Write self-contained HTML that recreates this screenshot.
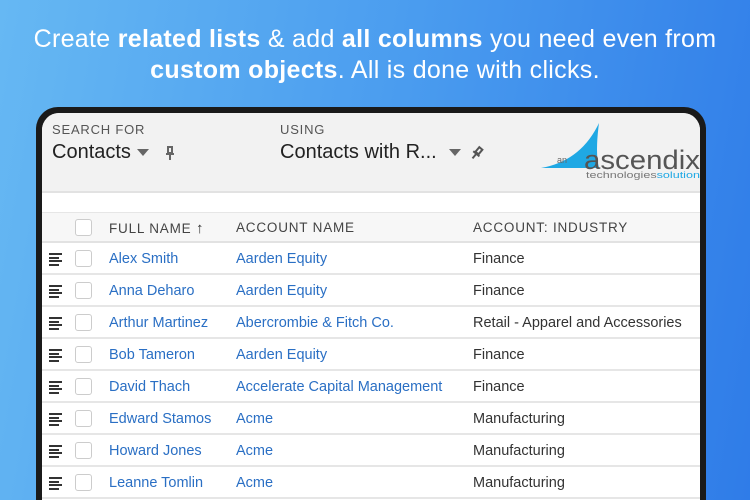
<!DOCTYPE html>
<html><head><meta charset="utf-8"><style>
*{margin:0;padding:0;box-sizing:border-box}
html,body{width:750px;height:500px;overflow:hidden}
body{background:linear-gradient(100deg,#66b8f3 0%,#4a9cef 50%,#2f7ce8 100%);font-family:"Liberation Sans",sans-serif;position:relative}
.title{position:absolute;top:24px;left:0;width:750px;text-align:center;color:#fff;font-size:25px;line-height:31px;letter-spacing:0.3px}
.frame{position:absolute;left:36px;top:107px;width:670px;height:400px;background:#1a1a1a;border-radius:22px 22px 0 0}
.inner{position:absolute;left:42px;top:113px;width:658px;height:390px;background:#fff;border-radius:17px 17px 0 0;overflow:hidden}
.hdr{position:absolute;left:0;top:0;width:100%;height:80px;background:#f2f2f2;border-bottom:2px solid #e2e2e2}
.lbl{position:absolute;font-size:13px;color:#555;letter-spacing:.8px}
.big{position:absolute;font-size:20px;color:#222}
.tri{display:inline-block;width:0;height:0;border-left:6px solid transparent;border-right:6px solid transparent;border-top:7px solid #666;vertical-align:middle;margin-left:6px}
.th{position:absolute;left:0;top:99px;width:100%;height:31px;background:#f7f7f7;border-top:1px solid #e6e6e6;border-bottom:2px solid #e2e2e2}
.th span{position:absolute;top:7px;font-size:13.5px;color:#444;letter-spacing:.8px}
.row{position:absolute;left:0;width:100%;height:32px;border-bottom:2px solid #e6e6e6;font-size:14.5px}
.row span{position:absolute;top:8px}
.a{color:#2a6fc4}.t{color:#333}
.cb{position:absolute;left:33px;top:7px;width:17px;height:17px;border:1px solid #ccc;border-radius:3px;background:#fff}
.ham{position:absolute;left:7px;top:10px;width:13px}
.ham i{display:block;height:2px;background:#333;margin-bottom:1.5px}
</style></head><body>
<div class="title">Create <b>related lists</b> &amp; add <b>all columns</b> you need even from<br><b>custom objects</b>. All is done with clicks.</div>
<div class="frame"></div>
<div class="inner">
 <div class="hdr">
  <div class="lbl" style="left:10px;top:9px">SEARCH FOR</div>
  <div class="big" style="left:10px;top:28px">Contacts<span class="tri"></span><svg width="14" height="16" viewBox="0 0 14 16" style="margin-left:14px;vertical-align:middle"><path d="M4 2h6M5 2v6h4V2M3 9h8M7 9v6" stroke="#666" stroke-width="2" fill="none"/></svg></div>
  <div class="lbl" style="left:238px;top:9px">USING</div>
  <div class="big" style="left:238px;top:28px">Contacts with R...<span class="tri" style="margin-left:12px"></span><svg width="16" height="16" viewBox="0 0 16 16" style="margin-left:8px;vertical-align:middle"><g transform="rotate(40 8 8)"><path d="M5 2h6M6 2v6h4V2M4 9h8M8 9v6" stroke="#555" stroke-width="2" fill="none"/></g></svg></div>
  <svg style="position:absolute;left:497px;top:8px" width="163" height="60" viewBox="0 0 163 60">
   <path d="M2 47 Q42 40 60 2 Q56 32 60 47 Z" fill="#1fa8e4"/>
   <text x="18" y="42" font-size="9" fill="#666" font-family="Liberation Sans">an</text>
   <text x="45" y="48" font-size="27" fill="#555" font-family="Liberation Sans" textLength="116" lengthAdjust="spacingAndGlyphs">ascendix</text>
   <text x="47" y="57" font-size="9" fill="#777" font-family="Liberation Sans" textLength="114" lengthAdjust="spacingAndGlyphs">technologies<tspan fill="#1fa8e4">solution</tspan></text>
  </svg>
 </div>
 <div class="th">
  <div class="cb" style="top:6px"></div>
  <span style="left:67px">FULL NAME <b style="font-size:15px;color:#333">↑</b></span>
  <span style="left:194px">ACCOUNT NAME</span>
  <span style="left:431px">ACCOUNT: INDUSTRY</span>
 </div>
 <div class="row" style="top:130px"><div class="ham"><i></i><i style="width:10px"></i><i></i><i style="width:10px"></i></div><div class="cb"></div><span class="a" style="left:67px">Alex Smith</span><span class="a" style="left:194px">Aarden Equity</span><span class="t" style="left:431px">Finance</span></div>
 <div class="row" style="top:162px"><div class="ham"><i></i><i style="width:10px"></i><i></i><i style="width:10px"></i></div><div class="cb"></div><span class="a" style="left:67px">Anna Deharo</span><span class="a" style="left:194px">Aarden Equity</span><span class="t" style="left:431px">Finance</span></div>
 <div class="row" style="top:194px"><div class="ham"><i></i><i style="width:10px"></i><i></i><i style="width:10px"></i></div><div class="cb"></div><span class="a" style="left:67px">Arthur Martinez</span><span class="a" style="left:194px">Abercrombie &amp; Fitch Co.</span><span class="t" style="left:431px">Retail - Apparel and Accessories</span></div>
 <div class="row" style="top:226px"><div class="ham"><i></i><i style="width:10px"></i><i></i><i style="width:10px"></i></div><div class="cb"></div><span class="a" style="left:67px">Bob Tameron</span><span class="a" style="left:194px">Aarden Equity</span><span class="t" style="left:431px">Finance</span></div>
 <div class="row" style="top:258px"><div class="ham"><i></i><i style="width:10px"></i><i></i><i style="width:10px"></i></div><div class="cb"></div><span class="a" style="left:67px">David Thach</span><span class="a" style="left:194px">Accelerate Capital Management</span><span class="t" style="left:431px">Finance</span></div>
 <div class="row" style="top:290px"><div class="ham"><i></i><i style="width:10px"></i><i></i><i style="width:10px"></i></div><div class="cb"></div><span class="a" style="left:67px">Edward Stamos</span><span class="a" style="left:194px">Acme</span><span class="t" style="left:431px">Manufacturing</span></div>
 <div class="row" style="top:322px"><div class="ham"><i></i><i style="width:10px"></i><i></i><i style="width:10px"></i></div><div class="cb"></div><span class="a" style="left:67px">Howard Jones</span><span class="a" style="left:194px">Acme</span><span class="t" style="left:431px">Manufacturing</span></div>
 <div class="row" style="top:354px"><div class="ham"><i></i><i style="width:10px"></i><i></i><i style="width:10px"></i></div><div class="cb"></div><span class="a" style="left:67px">Leanne Tomlin</span><span class="a" style="left:194px">Acme</span><span class="t" style="left:431px">Manufacturing</span></div>
</div>
</body></html>
